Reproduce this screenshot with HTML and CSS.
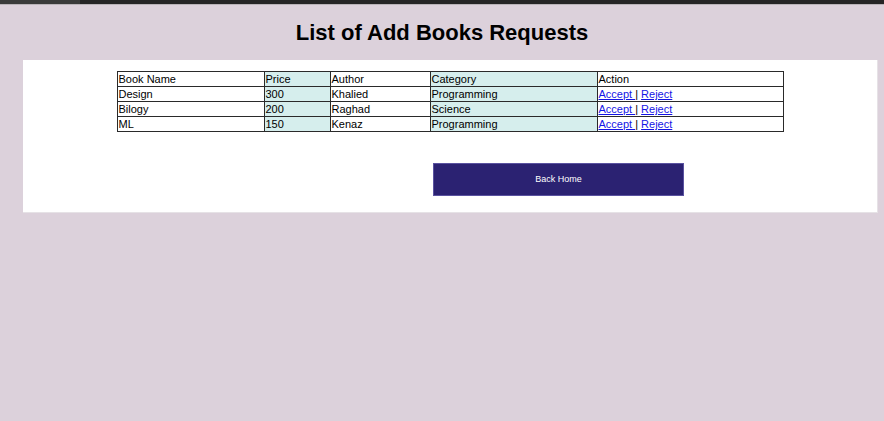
FILE: index.html
```html
<!DOCTYPE html>
<html>
<head>
<meta charset="utf-8">
<link rel="stylesheet" href="styles.css">
</head>
<body>
<div class="topbar"><div class="topbar-left"></div><div class="topbar-right"></div></div>
<h1 class="title">List of Add Books Requests</h1>
<div class="panel">
  <table class="requests">
    <tr><td class="c-name">Book Name</td><td class="c-price">Price</td><td class="c-author">Author</td><td class="c-cat">Category</td><td class="c-action">Action</td></tr>
    <tr><td class="c-name">Design</td><td class="c-price">300</td><td class="c-author">Khalied</td><td class="c-cat">Programming</td><td class="c-action"><a href="#">Accept </a>| <a href="#">Reject</a></td></tr>
    <tr><td class="c-name">Bilogy</td><td class="c-price">200</td><td class="c-author">Raghad</td><td class="c-cat">Science</td><td class="c-action"><a href="#">Accept </a>| <a href="#">Reject</a></td></tr>
    <tr><td class="c-name">ML</td><td class="c-price">150</td><td class="c-author">Kenaz</td><td class="c-cat">Programming</td><td class="c-action"><a href="#">Accept </a>| <a href="#">Reject</a></td></tr>
  </table>
  <div class="actions"><button class="back">Back Home</button></div>
</div>
</body>
</html>
```
FILE: styles.css
```css
html, body { margin: 0; padding: 0; }
body {
  background: #dcd1db;
  font-family: "Liberation Sans", Arial, sans-serif;
  height: 421px;
  overflow: hidden;
}
.topbar {
  display: flex;
  height: 4px;
  border-bottom: 1px solid #b9b3b8;
}
.topbar-left { width: 80px; background: #3a3a3a; }
.topbar-right { flex: 1; background: #252525; }
.title {
  margin: 0;
  height: 55px;
  line-height: 55px;
  text-align: center;
  font-size: 22px;
  font-weight: bold;
  color: #000;
}
.panel {
  background: #fff;
  margin: 0 6px 0 23px;
  padding: 11px 0 16px;
  border-right: 1px solid #e6e2e6;
  border-bottom: 1px solid #e6e2e6;
}
.requests {
  border-collapse: collapse;
  width: 667px;
  margin: 0 auto;
  font-size: 11px;
  color: #000;
}
.requests td {
  border: 1px solid #2a2a2a;
  padding: 0 1px;
  height: 14px;
  line-height: 14px;
  white-space: nowrap;
}
.c-name { width: 144px; }
.c-price { width: 63px; background: #d6eeed; }
.c-author { width: 97px; }
.c-cat { width: 164px; background: #d6eeed; }
.requests a { color: #1515e6; text-decoration: underline; }
.actions {
  padding-left: 410px;
  margin-top: 31px;
}
.back {
  display: block;
  width: 251px;
  height: 33px;
  border: 1px solid #5a52a0;
  background: #2b2272;
  color: #fff;
  font-family: "Liberation Sans", Arial, sans-serif;
  font-size: 9px;
  padding: 0 0 2px;
}
```
